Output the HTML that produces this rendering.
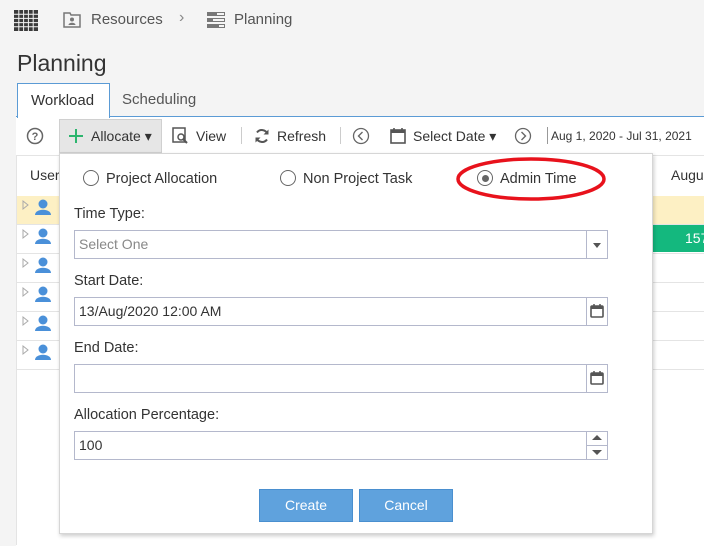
<!DOCTYPE html>
<html><head><style>
body{margin:0;width:704px;height:545px;background:#f4f4f4;font-family:"Liberation Sans",sans-serif;color:#333;position:relative;overflow:hidden}
.a{position:absolute}
.t{font-size:14px}
.l{font-size:14.5px}
.inp{position:absolute;left:74px;width:532px;height:27px;border:1px solid #b4b8cc;background:#fff;font-size:14px;line-height:27px;box-sizing:content-box}
.inp span{padding-left:4px}
.btnx{position:absolute;right:0;top:0;width:20px;height:27px;border-left:1px solid #b4b8cc}
.row{position:absolute;left:16px;width:688px;height:28px;border-bottom:1px solid #e4e4e4;background:#fff}
.radio{position:absolute;width:14px;height:14px;border:1.5px solid #666;border-radius:50%;background:#fff}
</style></head><body>
<svg class="a" style="left:14px;top:10px" width="24" height="21"><g fill="#3a3a3a"><rect x="0" y="0" width="24" height="21"/></g><g stroke="#f4f4f4" stroke-width="1"><path d="M4.8 0V21M9.6 0V21M14.4 0V21M19.2 0V21M0 4.2H24M0 8.4H24M0 12.6H24M0 16.8H24"/></g></svg>
<svg class="a" style="left:63px;top:11px" width="18" height="17"><path d="M1 2h6l1 2h9v12H1z" fill="none" stroke="#777" stroke-width="1.5"/><circle cx="9" cy="8.5" r="2" fill="#777"/><path d="M5.5 14c0-3 7-3 7 0z" fill="#777"/></svg>
<div class="a" style="left:91px;top:11px;font-size:15px;color:#555">Resources</div>
<div class="a" style="left:179px;top:9px;font-size:16px;color:#888">›</div>
<svg class="a" style="left:207px;top:12px" width="18" height="16"><g fill="#777"><rect x="0" y="0" width="18" height="4"/><rect x="0" y="6" width="18" height="4"/><rect x="0" y="12" width="18" height="4"/></g><g fill="#f4f4f4"><rect x="10" y="1" width="7" height="2"/><rect x="6" y="7" width="11" height="2"/><rect x="12" y="13" width="5" height="2"/></g></svg>
<div class="a" style="left:234px;top:11px;font-size:15px;color:#555">Planning</div>
<div class="a" style="left:17px;top:50px;font-size:23px;color:#333">Planning</div>
<div class="a" style="left:16px;top:116px;width:688px;height:429px;background:#fff;border-top:1px solid #5b9bd5"></div>
<div class="a" style="left:17px;top:83px;width:91px;height:34px;background:#fff;border:1px solid #5b9bd5;border-bottom:none"></div>
<div class="a t" style="left:31px;top:92px;font-size:15px">Workload</div>
<div class="a t" style="left:122px;top:91px;font-size:15px;color:#555">Scheduling</div>
<svg class="a" style="left:26px;top:127px" width="18" height="18"><circle cx="9" cy="9" r="7.5" fill="none" stroke="#666" stroke-width="1.5"/><text x="9" y="13" font-size="11" text-anchor="middle" fill="#666" font-family="Liberation Sans" font-weight="bold">?</text></svg>
<div class="a" style="left:59px;top:119px;width:103px;height:34px;background:#e6e6e6;border:1px solid #d0d0d0;box-sizing:border-box"></div>
<svg class="a" style="left:68px;top:128px" width="16" height="16"><path d="M8 1v14M1 8h14" stroke="#2db56e" stroke-width="2"/></svg>
<div class="a t" style="left:91px;top:128px">Allocate ▾</div>
<svg class="a" style="left:172px;top:127px" width="16" height="17"><rect x="1" y="1" width="12" height="14" fill="none" stroke="#555" stroke-width="1.5"/><circle cx="9" cy="10" r="3" fill="#fff" stroke="#555" stroke-width="1.5"/><path d="M11 12l4 4" stroke="#555" stroke-width="2"/></svg>
<div class="a t" style="left:196px;top:128px">View</div>
<div class="a" style="left:241px;top:127px;width:1px;height:17px;background:#ccc"></div>
<svg class="a" style="left:254px;top:128px" width="16" height="16"><path d="M13.5 6A6 6 0 0 0 3 4.5M2.5 10A6 6 0 0 0 13 11.5" fill="none" stroke="#555" stroke-width="2"/><path d="M14.5 1.5v5h-5zM1.5 14.5v-5h5z" fill="#555"/></svg>
<div class="a t" style="left:277px;top:128px">Refresh</div>
<div class="a" style="left:340px;top:127px;width:1px;height:17px;background:#ccc"></div>
<svg class="a" style="left:352px;top:127px" width="18" height="18"><circle cx="9" cy="9" r="7.5" fill="none" stroke="#666" stroke-width="1.3"/><path d="M10.5 5l-4 4 4 4" fill="none" stroke="#666" stroke-width="1.4"/></svg>
<svg class="a" style="left:390px;top:127px" width="16" height="17"><rect x="1" y="3" width="14" height="13" fill="none" stroke="#555" stroke-width="1.6"/><rect x="1" y="3" width="14" height="3" fill="#555"/><path d="M4 1v3M12 1v3" stroke="#555" stroke-width="1.6"/></svg>
<div class="a t" style="left:413px;top:128px">Select Date ▾</div>
<svg class="a" style="left:514px;top:127px" width="18" height="18"><circle cx="9" cy="9" r="7.5" fill="none" stroke="#666" stroke-width="1.3"/><path d="M7.5 5l4 4-4 4" fill="none" stroke="#666" stroke-width="1.4"/></svg>
<div class="a" style="left:547px;top:127px;width:1px;height:17px;background:#999"></div>
<div class="a" style="left:551px;top:129px;font-size:12px">Aug 1, 2020 - Jul 31, 2021</div>
<div class="a" style="left:16px;top:155px;width:688px;height:40px;border-top:1px solid #e4e4e4;border-bottom:1px solid #e4e4e4;background:#fff"></div>
<div class="a t" style="left:30px;top:167px">User</div>
<div class="a t" style="left:671px;top:167px">Augu</div>
<div class="row" style="top:196px;background:#fdf0c4"></div>
<div class="row" style="top:225px"></div><div class="row" style="top:254px"></div><div class="row" style="top:283px"></div><div class="row" style="top:312px"></div><div class="row" style="top:341px"></div>
<div class="a" style="left:652px;top:225px;width:52px;height:27px;background:#14b87e;color:#fff;font-size:14px;line-height:27px;padding-left:33px;box-sizing:border-box">157</div>
<div class="a" style="left:16px;top:155px;width:1px;height:390px;background:#e4e4e4"></div>
<svg class="a" style="left:20px;top:196px" width="40" height="175"><g id="u"><path d="M3 5l5 4-5 4z" fill="none" stroke="#aaa"/><circle cx="23" cy="8" r="4.5" fill="#4a90d9"/><path d="M15 19c0-7 16-7 16 0z" fill="#4a90d9"/></g><use href="#u" y="29"/><use href="#u" y="58"/><use href="#u" y="87"/><use href="#u" y="116"/><use href="#u" y="145"/></svg>
<div class="a" style="left:59px;top:153px;width:592px;height:379px;background:#fff;border:1px solid #d6d6d6;box-shadow:1px 2px 4px rgba(0,0,0,.2)"></div>
<div class="radio" style="left:83px;top:170px"></div>
<div class="a l" style="left:106px;top:171px">Project Allocation</div>
<div class="radio" style="left:280px;top:170px"></div>
<div class="a l" style="left:303px;top:171px">Non Project Task</div>
<div class="radio" style="left:477px;top:170px"></div>
<div class="a" style="left:482px;top:175px;width:7px;height:7px;border-radius:50%;background:#666"></div>
<div class="a l" style="left:500px;top:171px">Admin Time</div>
<svg class="a" style="left:455px;top:155px" width="152" height="48"><ellipse cx="76" cy="24" rx="73" ry="20" fill="none" stroke="#e8121c" stroke-width="3.5"/></svg>
<div class="a l" style="left:74px;top:206px">Time Type:</div>
<div class="inp" style="top:230px;color:#888"><span>Select One</span><div class="btnx"><div style="margin:12px 0 0 6px;width:0;height:0;border:4px solid transparent;border-top:5px solid #555"></div></div></div>
<div class="a l" style="left:74px;top:273px">Start Date:</div>
<div class="inp" style="top:297px"><span>13/Aug/2020 12:00 AM</span><div class="btnx"><svg width="20" height="27"><rect x="4" y="8" width="12" height="11" rx="1" fill="none" stroke="#555" stroke-width="1.6"/><rect x="4" y="8" width="12" height="3" fill="#555"/><path d="M7 6v3M13 6v3" stroke="#555" stroke-width="1.5"/></svg></div></div>
<div class="a l" style="left:74px;top:340px">End Date:</div>
<div class="inp" style="top:364px"><div class="btnx"><svg width="20" height="27"><rect x="4" y="8" width="12" height="11" rx="1" fill="none" stroke="#555" stroke-width="1.6"/><rect x="4" y="8" width="12" height="3" fill="#555"/><path d="M7 6v3M13 6v3" stroke="#555" stroke-width="1.5"/></svg></div></div>
<div class="a l" style="left:74px;top:407px">Allocation Percentage:</div>
<div class="inp" style="top:431px"><span>100</span><div class="btnx"><div style="height:13px;border-bottom:1px solid #b4b8cc"><div style="margin:0 0 0 5px;padding-top:3px;width:0;height:0;border:5px solid transparent;border-bottom:5px solid #555;border-top:0"></div></div><div style="margin:4px 0 0 5px;width:0;height:0;border:5px solid transparent;border-top:5px solid #555;border-bottom:0"></div></div></div>
<div class="a" style="left:259px;top:489px;width:94px;height:33px;background:#5fa2dd;border:1px solid #4a8fcf;box-sizing:border-box;color:#fff;font-size:14px;text-align:center;line-height:31px">Create</div>
<div class="a" style="left:359px;top:489px;width:94px;height:33px;background:#5fa2dd;border:1px solid #4a8fcf;box-sizing:border-box;color:#fff;font-size:14px;text-align:center;line-height:31px">Cancel</div>
</body></html>
